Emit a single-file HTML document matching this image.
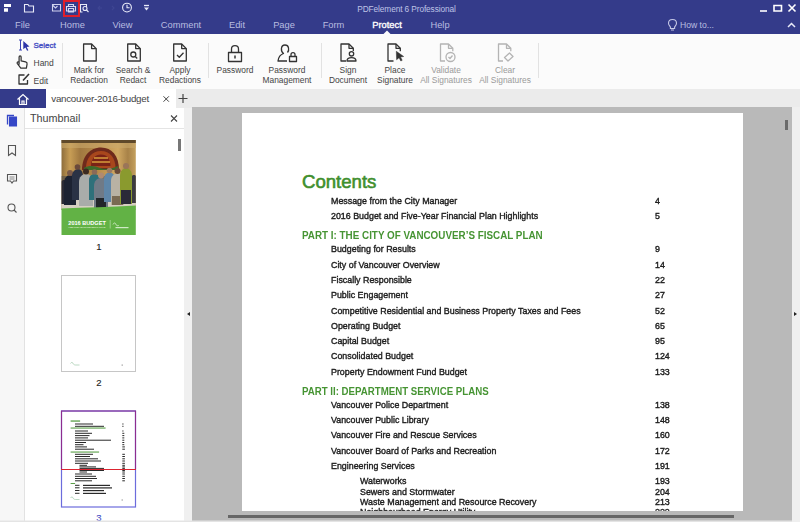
<!DOCTYPE html>
<html><head><meta charset="utf-8">
<style>
*{margin:0;padding:0;box-sizing:border-box}
html,body{width:800px;height:522px;overflow:hidden;background:#fff;font-family:"Liberation Sans",sans-serif}
.abs,#app *{position:absolute}
#app{position:relative;width:800px;height:522px;overflow:hidden}
#hdr{left:0;top:0;width:800px;height:34px;background:#343b8a}
.mt{top:19px;font-size:9.3px;color:#b9bde0;line-height:12px;white-space:nowrap;transform:translateX(-50%)}
#ribbon{left:0;top:34px;width:800px;height:55px;background:#fbfbfb}
.rl{font-size:8.4px;line-height:10px;color:#444;text-align:center;white-space:nowrap;transform:translateX(-50%);top:65px}
.rl.dis{color:#9a9a9a}
.sep{top:43px;width:1px;height:35px;background:#e2e2e2}
.st{left:33.5px;font-size:8.5px;line-height:10px;color:#444}
#tabbar{left:0;top:89px;width:800px;height:19px;background:#ebebeb}
#side{left:0;top:108px;width:24px;height:414px;background:#f7f7f7}
#thumbs{left:24px;top:108px;width:160px;height:414px;background:#fff;border-left:1px solid #e2e2e2}
#split{left:184px;top:108px;width:8px;height:414px;background:#f0f0f0}
#doc{left:192px;top:107px;width:600px;height:415px;background:#b9b9b9;overflow:hidden}
#rpanel{left:792px;top:107px;width:8px;height:415px;background:#efefef}
#page{left:50px;top:6px;width:501px;height:398px;background:#fff;overflow:hidden;font-family:"Liberation Sans",sans-serif}
.e{left:89px;font-size:9.7px;line-height:12px;color:#1c1c1c;white-space:nowrap;transform:scaleX(.915);transform-origin:0 50%;-webkit-text-stroke:.4px #1c1c1c}
.n{left:413px;font-size:9.7px;line-height:12px;color:#1c1c1c;white-space:nowrap;transform:scaleX(.915);transform-origin:0 50%;-webkit-text-stroke:.4px #1c1c1c}
.p{left:60px;font-size:10.2px;font-weight:bold;line-height:12px;color:#469433;white-space:nowrap;transform:scaleX(.967);transform-origin:0 50%}
.s{left:118px}
.tn{left:64px;width:20px;text-align:center;font-size:9.5px;line-height:10px;color:#222;-webkit-text-stroke:.12px currentColor}
</style></head><body>
<div id="app">
 <div id="hdr">
  <div class="mt" style="left:406.5px;top:2.5px;color:#bfc3e6;font-size:8.3px;letter-spacing:-.1px">PDFelement 6 Professional</div>
  <div class="mt" style="left:22.5px">File</div>
  <div class="mt" style="left:72.5px">Home</div>
  <div class="mt" style="left:122.5px">View</div>
  <div class="mt" style="left:181px">Comment</div>
  <div class="mt" style="left:237px">Edit</div>
  <div class="mt" style="left:284px">Page</div>
  <div class="mt" style="left:333.5px">Form</div>
  <div class="mt" style="left:387px;color:#fff;-webkit-text-stroke:.35px #fff">Protect</div>
  <div class="mt" style="left:440px">Help</div>
  <div class="mt" style="left:697px;font-size:8.6px">How to...</div>
  <div style="left:62.5px;top:-.5px;width:17px;height:17.6px;border:2px solid #df1f2b"></div>
  <svg style="left:0;top:0" width="800" height="34" viewBox="0 0 800 34" fill="none" stroke="#e8eaf8" stroke-width="1.1">
   <!-- logo -->
   <path d="M4 4h7v3H4zM4 8.2h4v3.6H4z" fill="#fff" stroke="none"/>
   <!-- folder -->
   <path d="M24.5 4.5h3.5l1 1.5h4.5v6h-9z"/>
   <!-- mail -->
   <path d="M52.5 4.5h8v6.5h-8z M52.5 5l3 3 2-2" stroke="#cfd2ee"/>
   <!-- print -->
   <path d="M68.5 6.5v-2h5v2 M66.5 6.5h9v4.5h-9z M68.5 8.5h5v3.5h-5z" stroke="#d6d8f0"/>
   <!-- search doc -->
   <path d="M86.5 7v-2.5h-6v7.5h2"/><circle cx="85" cy="8.5" r="2"/><path d="M86.5 10l2 2"/>
   <!-- clock -->
   <circle cx="127" cy="7.6" r="4.4"/><path d="M127 4.8v3h2.6"/>
   <!-- dropdown -->
   <path d="M144 5.5h5" stroke-width="1.3"/><path d="M144 7.5h5l-2.5 3z" fill="#e8eaf8" stroke="none"/>
   <!-- undo/redo faint -->
   <path d="M100 6l-2 2 2 2M98 8h4M112 6l2 2-2 2" stroke="#3f4693"/>
   <!-- bulb -->
   <path d="M672.5 19.5c-2.5 0-4 1.8-4 3.8 0 1.7 1.2 2.6 1.9 3.7v1.5h4.2v-1.5c.7-1.1 1.9-2 1.9-3.7 0-2-1.5-3.8-4-3.8z M671 30h3" stroke="#c5c8e6"/>
   <!-- window controls -->
   <path d="M760 11h7" stroke-width="1.6" stroke="#fff"/><path d="M774 5.5h7.5v5.5h-7.5z" stroke-width="1.6" stroke="#fff"/><path d="M788.5 4.5l7 7M795.5 4.5l-7 7" stroke-width="1.6" stroke="#fff"/>
   <path d="M788 27l3.5-3.5 3.5 3.5" stroke-width="1.5" stroke="#e8eaf8"/>
   <path d="M383.5 34l3.5-3.5 3.5 3.5z" fill="#fbfbfb" stroke="none"/>
  </svg>
 </div>

 <div id="ribbon"></div>
 <div class="st" style="top:41px;font-size:8px;color:#4650c4;-webkit-text-stroke:.35px #4650c4">Select</div>
 <div class="st" style="top:58px">Hand</div>
 <div class="st" style="top:75.5px">Edit</div>
 <div class="sep" style="left:62px"></div>
 <div class="sep" style="left:208px"></div>
 <div class="sep" style="left:321px"></div>
 <div class="sep" style="left:538px"></div>
 <div class="rl" style="left:89px">Mark for<br>Redaction</div>
 <div class="rl" style="left:133px">Search &amp;<br>Redact</div>
 <div class="rl" style="left:180px">Apply<br>Redactions</div>
 <div class="rl" style="left:235px">Password</div>
 <div class="rl" style="left:287px">Password<br>Management</div>
 <div class="rl" style="left:348px">Sign<br>Document</div>
 <div class="rl" style="left:395px">Place<br>Signature</div>
 <div class="rl dis" style="left:446px">Validate<br>All Signatures</div>
 <div class="rl dis" style="left:505px">Clear<br>All Signatures</div>
 <svg style="left:0;top:34px" width="800" height="54" viewBox="0 34 800 54" fill="none" stroke="#333" stroke-width="1.3" stroke-linejoin="round">
  <!-- select/hand/edit icons -->
  <path d="M20.5 40v10M19 40h3M19 50h3" stroke="#3a43b5" stroke-width="1"/><path d="M23.3 41l6.2 5.6-2.8.3 1.7 3.3-1.3.6-1.7-3.3-2.1 1.7z" fill="#2e36a8" stroke="none"/>
  <g transform="translate(22.8 62.5) scale(1.120) translate(-22.8 -62.5)"><path d="M19.5 64v-6.5c0-1.3 1.8-1.3 1.8 0v3.5l4 1c1.2.3 1.5 1 1.3 2l-.6 3.5h-5l-3-4c-.8-1.2.6-2 1.5-1z" stroke-width="1.1"/></g>
  <path d="M27.5 80v4h-8.5v-9h5.5" stroke-width="1.3"/><path d="M23 80.5l6-6.5" stroke-width="1.6"/>
  <!-- doc icons -->
  <g><path d="M83.6 44h8l4.6 4.6v12.4h-12.6z"/><path d="M91.6 44v4.6h4.6"/></g>
  <g><path d="M127.7 44h8l4.6 4.6v12.4h-12.6z"/><path d="M135.7 44v4.6h4.6"/><circle cx="133.3" cy="54.5" r="2.5"/><path d="M135.2 56.5l2 2"/></g>
  <g><path d="M173.7 44h8l4.6 4.6v12.4h-12.6z"/><path d="M181.7 44v4.6h4.6"/><path d="M177 55l2.3 2.3 4.2-4.6"/></g>
  <!-- password -->
  <path d="M228.5 52.5h13v9h-13z"/><path d="M231.5 52.5v-3.5c0-4.6 7-4.6 7 0v3.5"/><path d="M235 55.5v3" stroke-width="1.5"/>
  <!-- password mgmt -->
  <path d="M285 45c-4.5 0-4.5 6.5-1.5 8.5-3 1-5 3.5-5.5 7.5h9"/><path d="M285 45c4 0 4.5 5 2.5 7.5"/><path d="M289.5 56.5h7v5h-7z"/><path d="M291 56.5v-2c0-2.5 4-2.5 4 0v2"/>
  <!-- sign document -->
  <path d="M346 61h-5v-17h8l4.3 4.3v2.7"/><path d="M349 44v4.3h4.3"/><circle cx="351.5" cy="53.8" r="2.2"/><path d="M347 61c0-4.5 9-4.5 9 0z"/>
  <!-- place signature -->
  <path d="M393.5 61h-5.5v-17h8l4.3 4.3v3"/><path d="M396 44v4.3h4.3"/><path d="M396.3 51.3l7.4 5.2-3.2.5 1.7 3.3-1.4.7-1.7-3.3-2.500 2z" fill="#333" stroke-width=".5"/>
  <!-- validate -->
  <g stroke="#b4b4b4"><path d="M445 61h-4.5v-17h8l4.3 4.3v3"/><path d="M448.5 44v4.3h4.3"/><circle cx="450.5" cy="57" r="4.5"/><path d="M448.5 57l1.5 1.5 2.5-3"/></g>
  <!-- clear -->
  <g stroke="#b4b4b4"><path d="M503 61h-4.5v-17h8l4.3 4.3v3"/><path d="M506.5 44v4.3h4.3"/><path d="M504.5 57.5l5-4.5 3.5 3.5-5 4.5z"/></g>
 </svg>

 <div id="tabbar">
  <div style="left:0;top:0;width:46px;height:19px;background:#343b8a"></div>
  <div style="left:46px;top:0;width:130px;height:19px;background:#fff"></div>
  <div style="left:51.3px;top:4px;font-size:9.8px;letter-spacing:-.28px;line-height:12px;color:#444;white-space:nowrap">vancouver-2016-budget</div>
  <svg style="left:0;top:0" width="200" height="20" fill="none" stroke="#444" stroke-width="1.1">
   <path d="M17.5 10.5l5.5-5 5.5 5M19.5 9.5v6h7v-6M22 15.5v-3.5h2v3.5" stroke="#fff" stroke-width="1.2"/>
   <path d="M163.5 7.3l5.4 5.4M168.9 7.3l-5.4 5.4" stroke-width="1"/>
   <path d="M183 5v9M178.5 9.5h9" stroke-width="1.2"/>
  </svg>
 </div>

 <div id="side">
  <svg style="left:0;top:0" width="24" height="120" fill="none" stroke="#555" stroke-width="1.1">
   <path d="M9.5 9h7v9h-7z" fill="#3547c7" stroke="#3547c7"/><path d="M7.5 16.5v-9h6.5" stroke="#3547c7" stroke-width="1.3"/>
   <path d="M8.5 37.5h7v10l-3.5-2.5-3.5 2.5z"/>
   <path d="M7.5 66.5h9v6.5h-3l-1.5 2-1.5-2h-3z"/><path d="M9.5 69h5M9.5 71h5" stroke-width=".7"/>
   <circle cx="11.5" cy="99.5" r="3.5"/><path d="M14 102l2.5 2.5"/>
  </svg>
 </div>
 <div id="thumbs">
  <div style="left:5px;top:3px;font-size:10.8px;line-height:14px;color:#444">Thumbnail</div>
  <div style="left:0;top:20px;width:160px;height:1px;background:#e4e4e4"></div>
  <svg style="left:140px;top:3px" width="16" height="16" fill="none" stroke="#444" stroke-width="1.1"><path d="M6 4.5l6 6M12 4.5l-6 6"/></svg>
  <div style="left:153px;top:31px;width:3px;height:12px;background:#777"></div>
  <!-- thumbnails drawn in page coordinates -->
  <svg style="left:-25px;top:-108px" width="190" height="630" viewBox="0 0 190 630">
   <defs>
    <filter id="bl" x="-10%" y="-10%" width="120%" height="120%"><feGaussianBlur stdDeviation="0.7"/></filter>
    <clipPath id="c1"><rect x="61.5" y="140" width="74.3" height="95"/></clipPath>
    <linearGradient id="wood" x1="0" x2="1" y1="0" y2="0">
     <stop offset="0" stop-color="#8a6a3a"/><stop offset=".12" stop-color="#c79d55"/><stop offset=".25" stop-color="#a07840"/><stop offset=".5" stop-color="#b98e4c"/><stop offset=".75" stop-color="#d0a862"/><stop offset=".88" stop-color="#a88248"/><stop offset="1" stop-color="#c9a662"/>
    </linearGradient>
   </defs>
   <g clip-path="url(#c1)">
    <rect x="61" y="140" width="76" height="70" fill="url(#wood)"/>
    <g filter="url(#bl)">
     <rect x="61" y="139" width="76" height="4" fill="#5e4a2c"/>
     <rect x="61" y="143" width="76" height="5" fill="#c9a86a" opacity=".6"/>
     <path d="M82 170c0-14 8-22.5 19-22.5s18 8.5 18 22.5z" fill="#6e2a1a"/>
     <path d="M86 168c0-10 6-17 15-17s14.5 7 14.5 17z" fill="#a8461f"/>
     <path d="M91 166c0-7 4-11.5 10-11.5s9.5 4.5 9.5 11.5z" fill="#7a2418"/>
     <path d="M94 158h14M92 162h18" stroke="#d89a3a" stroke-width="1.6"/>
     <path d="M84 168c5-3 11-2 16 0s12 1 18-2v4h-34z" fill="#3d6a2c"/>
     <rect x="61" y="194" width="76" height="15" fill="#c4baa8"/>
     <rect x="61" y="200" width="76" height="9" fill="#d6cfc2"/>
     <!-- people -->
     <rect x="61" y="176" width="76" height="22" fill="#4a4a50" opacity=".55"/>
     <path d="M60 204v-18c0-4 2-6 4-6s4 2 4 6v18z" fill="#2a2a34"/>
     <path d="M130 203v-22c0-4 2-6 4-6s4 2 4 6v22z" fill="#3a3a40"/>
     <path d="M64 205v-22c0-5 3-8 6-8s6 3 6 8v22z" fill="#1f2230"/>
     <circle cx="70" cy="173" r="3" fill="#7a5a48"/>
     <path d="M72 200v-24c0-4 3-7 6-7s5 3 5 7v24z" fill="#2a3045"/>
     <circle cx="77.5" cy="167" r="2.8" fill="#6a4a3a"/>
     <path d="M79 206v-24c0-5 3-8 7-8s7 3 7 8v24z" fill="#a9acaa"/>
     <circle cx="86" cy="171.5" r="3" fill="#3a2a22"/>
     <path d="M89 200v-20c0-4 3-6 5.5-6s5.5 2 5.5 6v20z" fill="#2d6f7a"/>
     <circle cx="94.5" cy="172" r="2.8" fill="#8a6a58"/>
     <path d="M94 208v-22c0-5 3-8 7-8s7 3 7 8v22z" fill="#6f7a86"/>
     <path d="M96 208v-10h10v10z" fill="#23252c"/>
     <circle cx="101" cy="175.5" r="3" fill="#b08a70"/>
     <path d="M104 202v-23c0-4 2.5-6.5 5.5-6.5s5.5 2.5 5.5 6.5v23z" fill="#5f86a8"/>
     <circle cx="109.5" cy="170.5" r="2.8" fill="#9a7a62"/>
     <path d="M111 205v-24c0-5 3-7.5 6.5-7.5s6.5 2.5 6.5 7.5v24z" fill="#b9b2a4"/>
     <path d="M112 205v-9h11v9z" fill="#7a6a52"/>
     <circle cx="117.5" cy="171" r="3" fill="#6a4a38"/>
     <path d="M120 204v-28c0-5 3-8 6-8s6 3 6 8v28z" fill="#8a9a2e"/>
     <path d="M121 204v-14h10v14z" fill="#2a2c38"/>
     <circle cx="126" cy="166" r="3" fill="#9a7458"/>
    </g>
    <path d="M61 208.5c25-1 50-1.5 76-3v30h-76z" fill="#62b245"/>
    <path d="M110.2 220v8.5" stroke="#d8efcf" stroke-width=".5"/>
    <path d="M113 224.5c.8-2 2.2-2 2.8-.3s2 1.8 3 1.3" stroke="#e6f5e0" stroke-width=".7" fill="none"/>
    <rect x="115.5" y="227" width="13" height="1.2" fill="#cfeac6"/>
    <text x="68.3" y="224.8" font-family="Liberation Sans, sans-serif" font-weight="bold" font-size="5.6" fill="#fff" textLength="37.5" lengthAdjust="spacingAndGlyphs">2016 BUDGET</text>
    <text x="68.3" y="228" font-family="Liberation Sans, sans-serif" font-weight="bold" font-size="2" fill="#e4f4dd" textLength="37" lengthAdjust="spacingAndGlyphs">AND FIVE-YEAR FINANCIAL PLAN</text>
   </g>
   <!-- thumb 2 -->
   <rect x="61.5" y="275.5" width="74" height="96" fill="#fff" stroke="#c6c6c6" stroke-width="1"/>
   <path d="M70.5 363.5c1-1.5 2-1.5 2.5 0 .5 1 1.5 1.5 2.5 1.5h4" stroke="#8fbf9a" stroke-width=".6" fill="none"/>
   <rect x="121.5" y="364.5" width="1.5" height="1.2" fill="#aaa"/>
   <!-- thumb 3 -->
   <rect x="61.5" y="411" width="74" height="96" fill="#fff" stroke="#6c6cdc" stroke-width="1.2"/>
   <rect x="70.6" y="420.4" width="9.5" height="1.3" fill="#5aa048"/><rect x="75.0" y="423.5" width="18.0" height="1.0" fill="#2a2a2a"/><rect x="75.0" y="425.8" width="29.0" height="1.0" fill="#2a2a2a"/><rect x="70.6" y="427.5" width="35.0" height="1.1" fill="#5aa048"/><rect x="75.0" y="430.5" width="13.0" height="1.0" fill="#2a2a2a"/><rect x="75.0" y="432.8" width="17.0" height="1.0" fill="#2a2a2a"/><rect x="75.0" y="435.1" width="14.5" height="1.0" fill="#2a2a2a"/><rect x="75.0" y="437.4" width="13.0" height="1.0" fill="#2a2a2a"/><rect x="75.0" y="439.7" width="36.0" height="1.0" fill="#2a2a2a"/><rect x="75.0" y="442.0" width="11.0" height="1.0" fill="#2a2a2a"/><rect x="75.0" y="444.2" width="8.5" height="1.0" fill="#2a2a2a"/><rect x="75.0" y="446.4" width="12.0" height="1.0" fill="#2a2a2a"/><rect x="75.0" y="448.7" width="19.0" height="1.0" fill="#2a2a2a"/><rect x="70.6" y="451.5" width="28.5" height="1.1" fill="#5aa048"/><rect x="75.0" y="453.8" width="18.0" height="1.0" fill="#2a2a2a"/><rect x="75.0" y="456.0" width="15.0" height="1.0" fill="#2a2a2a"/><rect x="75.0" y="458.3" width="23.0" height="1.0" fill="#2a2a2a"/><rect x="75.0" y="460.5" width="26.0" height="1.0" fill="#2a2a2a"/><rect x="75.0" y="462.8" width="13.0" height="1.0" fill="#2a2a2a"/><rect x="79.5" y="464.8" width="7.5" height="1.0" fill="#2a2a2a"/><rect x="79.5" y="466.4" width="16.5" height="1.0" fill="#2a2a2a"/><rect x="79.5" y="467.9" width="24.5" height="1.0" fill="#2a2a2a"/><rect x="79.5" y="470.0" width="24.5" height="1.0" fill="#2a2a2a"/><rect x="79.5" y="471.5" width="7.5" height="1.0" fill="#2a2a2a"/><rect x="75.0" y="473.5" width="17.0" height="1.0" fill="#2a2a2a"/><rect x="75.0" y="475.8" width="21.0" height="1.0" fill="#2a2a2a"/><rect x="75.0" y="478.0" width="22.0" height="1.0" fill="#2a2a2a"/><rect x="75.0" y="480.3" width="17.0" height="1.0" fill="#2a2a2a"/><rect x="70.6" y="483.0" width="4.5" height="1.0" fill="#5aa048"/><rect x="75.0" y="484.8" width="4.5" height="1.0" fill="#2a2a2a"/><rect x="83.0" y="484.8" width="27.0" height="1.2" fill="#2a2a2a"/><rect x="75.0" y="487.3" width="4.5" height="1.0" fill="#2a2a2a"/><rect x="83.0" y="487.3" width="29.0" height="1.2" fill="#2a2a2a"/><rect x="75.0" y="490.0" width="4.5" height="1.0" fill="#2a2a2a"/><rect x="83.0" y="490.0" width="21.0" height="1.2" fill="#2a2a2a"/><rect x="75.0" y="492.8" width="4.5" height="1.0" fill="#2a2a2a"/><rect x="83.0" y="492.8" width="23.0" height="1.2" fill="#2a2a2a"/><rect x="122.3" y="423.5" width="1.2" height="1.0" fill="#2a2a2a"/><rect x="122.3" y="425.8" width="1.2" height="1.0" fill="#2a2a2a"/><rect x="122.3" y="430.5" width="1.2" height="1.0" fill="#2a2a2a"/><rect x="122.3" y="432.8" width="2.0" height="1.0" fill="#2a2a2a"/><rect x="122.3" y="435.1" width="2.0" height="1.0" fill="#2a2a2a"/><rect x="122.3" y="437.4" width="2.0" height="1.0" fill="#2a2a2a"/><rect x="122.3" y="439.7" width="2.0" height="1.0" fill="#2a2a2a"/><rect x="122.3" y="442.0" width="2.0" height="1.0" fill="#2a2a2a"/><rect x="122.3" y="444.2" width="2.0" height="1.0" fill="#2a2a2a"/><rect x="122.3" y="446.4" width="2.6" height="1.0" fill="#2a2a2a"/><rect x="122.3" y="448.7" width="2.6" height="1.0" fill="#2a2a2a"/><rect x="122.3" y="453.8" width="2.6" height="1.0" fill="#2a2a2a"/><rect x="122.3" y="456.0" width="2.6" height="1.0" fill="#2a2a2a"/><rect x="122.3" y="458.3" width="2.6" height="1.0" fill="#2a2a2a"/><rect x="122.3" y="460.5" width="2.6" height="1.0" fill="#2a2a2a"/><rect x="122.3" y="462.8" width="2.6" height="1.0" fill="#2a2a2a"/><rect x="122.3" y="464.8" width="2.6" height="1.0" fill="#2a2a2a"/><rect x="122.3" y="466.4" width="2.6" height="1.0" fill="#2a2a2a"/><rect x="122.3" y="467.9" width="2.6" height="1.0" fill="#2a2a2a"/><rect x="122.3" y="470.0" width="2.6" height="1.0" fill="#2a2a2a"/><rect x="122.3" y="471.5" width="2.6" height="1.0" fill="#2a2a2a"/><rect x="122.3" y="473.5" width="2.6" height="1.0" fill="#2a2a2a"/><rect x="122.3" y="475.8" width="2.6" height="1.0" fill="#2a2a2a"/><rect x="122.3" y="478.0" width="2.6" height="1.0" fill="#2a2a2a"/><rect x="122.3" y="480.3" width="2.6" height="1.0" fill="#2a2a2a"/><path d="M70.5 498c1-1.5 2-1.5 2.5 0 .5 1 1.5 1.5 2.5 1.5h4" stroke="#8fbf9a" stroke-width=".6" fill="none"/><rect x="121.5" y="499.5" width="1.5" height="1.0" fill="#999"/>
   <path d="M61.5 469.5v-58.5h74v58.5" fill="none" stroke="#8e2c8e" stroke-width="1.1"/>
   <path d="M61 469.5h75" stroke="#dc2430" stroke-width="1.1"/>
  </svg>
  <div class="tn" style="top:134px">1</div>
  <div class="tn" style="top:270px">2</div>
  <div class="tn" style="top:404.5px;color:#4a55c8">3</div>
 </div>
 <div id="split"><div style="left:3px;top:204.3px;width:0;height:0;border:2.3px solid transparent;border-right:3px solid #222;border-left:0"></div></div>
 <div id="doc">
  <div id="page">
   <div class="p" style="top:59.3px;font-size:18.6px;line-height:20px;transform:none;font-weight:normal;color:#3f8f2e;-webkit-text-stroke:.6px #3f8f2e">Contents</div>
   <div class="e" style="top:82px">Message from the City Manager</div><div class="n" style="top:82px">4</div>
   <div class="e" style="top:97px">2016 Budget and Five-Year Financial Plan Highlights</div><div class="n" style="top:97px">5</div>
   <div class="p" style="top:117px">PART I: THE CITY OF VANCOUVER’S FISCAL PLAN</div>
   <div class="e" style="top:130px">Budgeting for Results</div><div class="n" style="top:130px">9</div>
   <div class="e" style="top:146px">City of Vancouver Overview</div><div class="n" style="top:146px">14</div>
   <div class="e" style="top:161px">Fiscally Responsible</div><div class="n" style="top:161px">22</div>
   <div class="e" style="top:176px">Public Engagement</div><div class="n" style="top:176px">27</div>
   <div class="e" style="top:192px">Competitive Residential and Business Property Taxes and Fees</div><div class="n" style="top:192px">52</div>
   <div class="e" style="top:207px">Operating Budget</div><div class="n" style="top:207px">65</div>
   <div class="e" style="top:222px">Capital Budget</div><div class="n" style="top:222px">95</div>
   <div class="e" style="top:237px">Consolidated Budget</div><div class="n" style="top:237px">124</div>
   <div class="e" style="top:253px">Property Endowment Fund Budget</div><div class="n" style="top:253px">133</div>
   <div class="p" style="top:273px;transform:scaleX(.95)">PART II: DEPARTMENT SERVICE PLANS</div>
   <div class="e" style="top:286px">Vancouver Police Department</div><div class="n" style="top:286px">138</div>
   <div class="e" style="top:301px">Vancouver Public Library</div><div class="n" style="top:301px">148</div>
   <div class="e" style="top:316px">Vancouver Fire and Rescue Services</div><div class="n" style="top:316px">160</div>
   <div class="e" style="top:332px">Vancouver Board of Parks and Recreation</div><div class="n" style="top:332px">172</div>
   <div class="e" style="top:347px">Engineering Services</div><div class="n" style="top:347px">191</div>
   <div class="e s" style="top:362px">Waterworks</div><div class="n" style="top:362px">193</div>
   <div class="e s" style="top:373px">Sewers and Stormwater</div><div class="n" style="top:373px">204</div>
   <div class="e s" style="top:383px">Waste Management and Resource Recovery</div><div class="n" style="top:383px">213</div>
   <div class="e s" style="top:393px">Neighbourhood Energy Utility</div><div class="n" style="top:393px">222</div>
  </div>
  <div style="left:36px;top:407.5px;width:506px;height:3.3px;background:#666"></div>
  <div style="left:593px;top:13px;width:3px;height:10px;background:#6a6a6a"></div>
 </div>
 <div style="left:0;top:520px;width:800px;height:1px;background:rgba(230,230,230,.5)"></div><div style="left:0;top:521px;width:800px;height:1px;background:#e4e4e4"></div>
 <div id="rpanel"><div style="left:2px;top:205px;width:0;height:0;border:2.3px solid transparent;border-left:3px solid #222;border-right:0"></div></div>
</div>
</body></html>
